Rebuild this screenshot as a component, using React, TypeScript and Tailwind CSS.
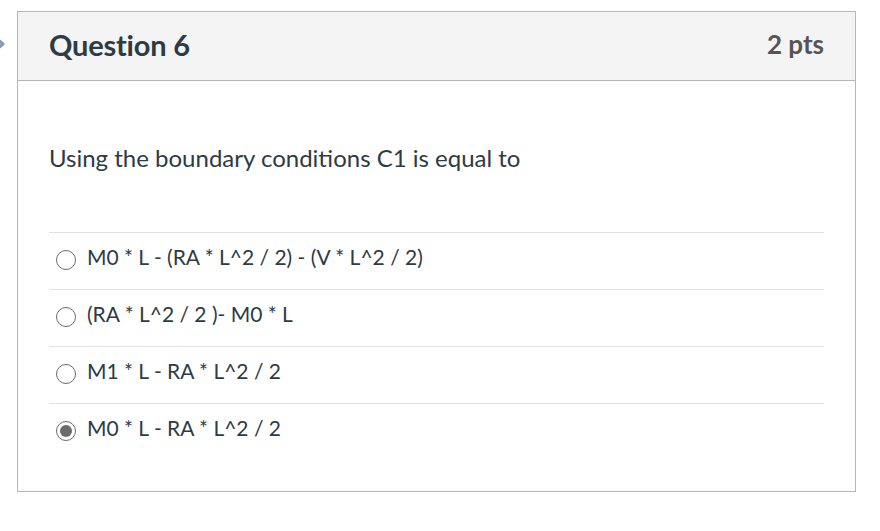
import React from "react";

const answers = [
  { text: "M0 * L - (RA * L^2 / 2) - (V * L^2 / 2)", checked: false },
  { text: "(RA * L^2 / 2 )- M0 * L", checked: false },
  { text: "M1 * L - RA * L^2 / 2", checked: false },
  { text: "M0 * L - RA * L^2 / 2", checked: true },
];

function Radio({ checked }: { checked: boolean }) {
  return (
    <span className="flex h-[20px] w-[20px] shrink-0 items-center justify-center rounded-full border-[1.5px] border-[#6b6b6b] bg-white">
      {checked && <span className="h-[12px] w-[12px] rounded-full bg-[#6b6b6b]" />}
    </span>
  );
}

export default function App() {
  return (
    <div className="relative h-[531px] w-[880px] bg-white font-['Lato','Noto_Sans',sans-serif] text-[#2d3b45]">
      {/* collapse arrow, mostly off screen */}
      <svg className="absolute left-[-6px] top-[36px]" width="12" height="16" viewBox="0 0 12 16">
        <path d="M2 2 L9 8 L2 14" fill="none" stroke="#8a9aa6" strokeWidth="3" strokeLinejoin="round" />
      </svg>

      <div className="pl-[17px] pt-[11px]">
        <div className="h-[481px] w-[839px] border border-[#b5b5b5] bg-white">
          <div className="flex h-[69px] items-center justify-between border-b border-[#b5b5b5] bg-[#f4f4f4] pb-[3px] pl-[31px] pr-[31px]">
            <span className="text-[29px] font-bold tracking-[-0.2px] text-[#2d3b45]">Question 6</span>
            <span className="text-[26px] font-bold text-[#555555]">2 pts</span>
          </div>

          <div className="px-[31px]">
            <p className="pt-[62px] text-[24px] leading-[30px] text-[#2d3b45]">
              Using the boundary conditions C1 is equal to
            </p>

            <div className="mt-[59px]">
              {answers.map((a, i) => (
                <div
                  key={i}
                  className="flex h-[57px] items-center gap-[11px] border-t border-[#e2e2e2] pl-[7px]"
                >
                  <span className="flex mb-[2px]">
                    <Radio checked={a.checked} />
                  </span>
                  <span className="mb-[8px] text-[21px] text-[#2d3b45]">{a.text}</span>
                </div>
              ))}
            </div>
          </div>
        </div>
      </div>
    </div>
  );
}
